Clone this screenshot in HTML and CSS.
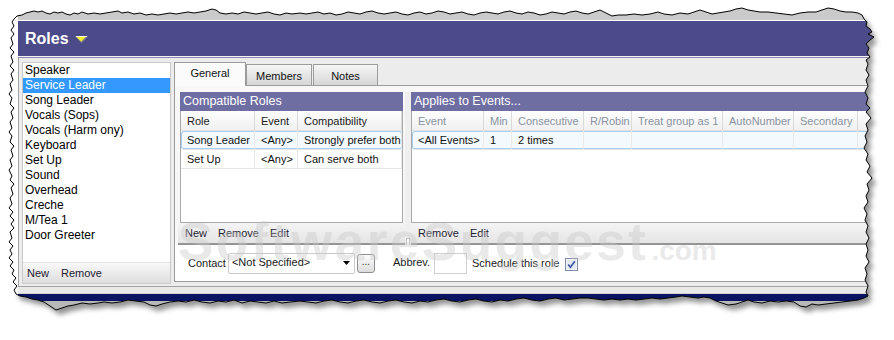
FILE: index.html
```html
<!DOCTYPE html>
<html>
<head>
<meta charset="utf-8">
<title>Roles</title>
<link rel="stylesheet" href="styles.css">
</head>
<body>
<div class="page">
  <div class="window">
    <div class="backband"></div>
    <div class="titlebar">
      <span class="title">Roles</span>
      <svg class="caret" width="13" height="7" viewBox="0 0 13 7"><polygon points="0,0 13,0 6.5,7" fill="#8a8a8a"/><polygon points="1,0.6 11.2,0.6 6,5.6" fill="#f3ee2c"/><polygon points="0.5,0 12.5,0 11.6,1 1.4,1" fill="#fffbe0"/></svg>
    </div>
    <div class="titlerule"></div>
    <div class="body">
      <div class="listpanel">
        <ul class="list">
          <li>Speaker</li>
          <li class="sel">Service Leader</li>
          <li>Song Leader</li>
          <li>Vocals (Sops)</li>
          <li>Vocals (Harm ony)</li>
          <li>Keyboard</li>
          <li>Set Up</li>
          <li>Sound</li>
          <li>Overhead</li>
          <li>Creche</li>
          <li>M/Tea 1</li>
          <li>Door Greeter</li>
        </ul>
        <div class="listbar"><span>New</span><span>Remove</span></div>
      </div>
      <div class="tabsarea">
        <div class="tabs">
          <div class="tab active">General</div>
          <div class="tab">Members</div>
          <div class="tab notes">Notes</div>
        </div>
        <div class="tabpanel">
          <div class="grids">
            <div class="section left">
              <div class="grid">
                <div class="gtitle">Compatible Roles</div>
                <div class="colhead cols-a">
                  <div class="cell">Role</div><div class="cell">Event</div><div class="cell">Compatibility</div>
                </div>
                <div class="row cols-a sel">
                  <div class="cell">Song Leader</div><div class="cell">&lt;Any&gt;</div><div class="cell">Strongly prefer both</div>
                </div>
                <div class="row cols-a">
                  <div class="cell">Set Up</div><div class="cell">&lt;Any&gt;</div><div class="cell">Can serve both</div>
                </div>
              </div>
              <div class="toolbar"><span>New</span><span>Remove</span><span>Edit</span></div>
            </div>
            <div class="splitter"><div class="handle"></div></div>
            <div class="section right">
              <div class="grid">
                <div class="gtitle">Applies to Events...</div>
                <div class="colhead cols-b dim">
                  <div class="cell">Event</div><div class="cell">Min</div><div class="cell">Consecutive</div><div class="cell">R/Robin</div><div class="cell">Treat group as 1</div><div class="cell">AutoNumber</div><div class="cell">Secondary</div><div class="cell"></div>
                </div>
                <div class="row cols-b sel">
                  <div class="cell">&lt;All Events&gt;</div><div class="cell">1</div><div class="cell">2 times</div><div class="cell"></div><div class="cell"></div><div class="cell"></div><div class="cell"></div><div class="cell"></div>
                </div>
              </div>
              <div class="toolbar"><span>Remove</span><span>Edit</span></div>
            </div>
          </div>
          <div class="form">
            <span>Contact</span>
            <div class="combo"><span>&lt;Not Specified&gt;</span><svg width="7" height="4" viewBox="0 0 7 4"><polygon points="0,0 7,0 3.5,4" fill="#000"/></svg></div>
            <div class="dots">...</div>
            <span class="abbrev">Abbrev.</span>
            <div class="input"></div>
            <span class="sched">Schedule this role</span>
            <svg class="check" width="13" height="13" viewBox="0 0 13 13"><rect x="0.5" y="0.5" width="12" height="12" fill="#e4e9f1" stroke="#7d8aa6"/><rect x="1.5" y="1.5" width="10" height="10" fill="none" stroke="#f4f6fa"/><path d="M3.2 6.6 L5.4 9.2 L9.8 3.2" fill="none" stroke="#3552a0" stroke-width="1.6"/></svg>
          </div>
        </div>
      </div>
    </div>
    <div class="footer"></div>
    <div class="navy"></div>
    <div class="ground"></div>
  </div>
  <div class="watermark">SoftwareSuggest<span>.com</span></div>
  <svg class="tear" width="894" height="340" viewBox="0 0 894 340">
    <defs>
      <polygon id="edge" points="12,22 14,19 17,16 22,15 26,13 30,12 34,11 38,12 42,11 46,13 50,14 54,12 58,13 62,12 66,14 70,15 74,13 78,14 82,12 88,14 94,13 100,14 106,13 112,12 118,11 122,13 128,12 134,14 140,13 146,15 152,14 158,15 164,14 170,13 176,14 182,13 188,12 194,13 200,12 206,11 212,9 216,10 220,13 226,14 232,13 238,14 244,12 250,13 256,14 262,13 268,12 274,14 280,15 286,13 292,14 300,13 306,14 312,13 318,12 324,14 330,13 336,15 342,14 348,12 354,13 360,14 366,12 372,11 378,13 384,14 390,13 396,12 402,14 408,15 414,13 420,12 426,14 432,13 438,11 444,12 450,14 456,13 462,12 468,14 474,15 480,13 486,12 492,13 498,14 504,12 510,11 516,13 522,14 528,12 534,13 540,15 546,14 552,12 558,13 564,14 570,12 576,11 582,13 588,14 594,12 600,10 606,13 612,16 618,15 626,15 634,14 642,15 650,14 658,12 664,14 672,15 680,13 688,14 694,12 700,10 706,12 712,14 718,13 724,12 730,11 736,9 742,8 748,10 754,11 760,12 768,12 776,13 784,14 792,15 800,13 808,12 816,12 822,10 828,8 834,9 840,11 846,12 852,12 858,13 862,15 864,19 867,22 866,26 870,29 872,32 868,34 874,37 870,40 866,44 869,48 867,53 870,57 866,60 868,64 866,70 869,75 866,80 868,86 865,92 868,98 866,104 870,108 866,112 871,118 866,124 868,130 865,136 867,142 864,148 868,154 866,160 870,166 867,172 872,178 867,184 869,190 866,196 868,202 864,208 867,214 865,220 868,226 866,232 869,238 866,244 868,250 866,256 869,262 865,268 867,274 865,280 868,286 866,292 868,296 864,298 858,300 850,301 842,302 834,303 826,304 818,305 812,304 806,307 800,306 794,302 786,301 778,302 770,301 762,303 754,302 748,300 742,302 736,304 728,305 722,303 716,301 710,298 704,297 698,298 690,297 682,296 676,297 668,298 660,299 652,298 644,299 636,300 628,299 620,300 612,299 604,300 596,299 588,298 580,298 572,299 564,300 556,298 548,299 540,301 532,300 524,298 516,299 508,301 500,300 492,302 484,301 476,299 468,300 460,302 452,301 444,299 436,300 428,302 420,301 412,303 404,302 396,300 388,301 380,303 372,302 364,300 356,301 348,303 340,302 332,300 324,301 316,303 308,302 300,301 290,302 282,303 274,301 266,303 258,302 250,301 242,303 234,300 226,302 218,301 210,303 202,302 194,300 186,302 178,301 170,302 162,304 156,306 150,305 144,302 136,301 128,300 120,302 112,303 104,302 98,303 90,304 82,303 74,305 68,306 62,308 56,310 50,306 44,302 38,300 32,299 26,297 20,296 16,294 14,290 17,286 13,282 16,278 12,274 14,270 10,266 13,262 9,258 12,254 10,250 13,246 9,242 12,238 10,232 14,228 11,224 14,220 10,216 13,212 9,208 12,204 10,198 13,194 11,188 14,184 10,180 12,176 9,170 12,166 10,160 13,156 11,150 14,146 10,142 12,136 9,132 12,128 10,122 13,118 11,112 14,108 10,104 12,98 9,94 12,90 10,84 13,80 11,74 14,70 10,66 13,62 11,56 14,52 10,48 13,44 11,38 14,34 11,30 14,26"/>
      <mask id="outside" maskUnits="userSpaceOnUse" x="0" y="0" width="894" height="340">
        <rect width="894" height="340" fill="#fff"/>
        <use href="#edge" fill="#000"/>
      </mask>
      <filter id="blur" x="-10%" y="-10%" width="120%" height="120%"><feGaussianBlur stdDeviation="2.6"/></filter>
    </defs>
    <rect width="894" height="340" fill="#fff" mask="url(#outside)"/>
    <g mask="url(#outside)"><use href="#edge" transform="translate(4 5)" fill="#000" fill-opacity="0.42" filter="url(#blur)"/></g>
    <use href="#edge" fill="none" stroke="#000" stroke-width="1"/>
  </svg>
</div>
</body>
</html>
```

FILE: styles.css
```css
* { box-sizing: border-box; }
html, body { margin: 0; padding: 0; background: #fff; }
body { font-family: "Liberation Sans", Arial, sans-serif; font-size: 11px; color: #1c1c1c; }

.page { position: relative; width: 894px; height: 340px; overflow: hidden; padding: 8px 0 0 18px; }
.window { width: 862px; }

.backband { height: 12px; background: #cacaca; }
.titlebar { height: 36px; border-top: 1px solid #ffffff; background: #4c4b8a; display: flex; align-items: center; gap: 6px; padding-left: 7px; }
.title { color: #fff; font-weight: bold; font-size: 16px; }
.caret { display: block; margin-top: 1px; }
.titlerule { height: 2px; border-top: 1px solid #f4f4f8; border-bottom: 1px solid #8b8aad; }

.body { height: 229px; display: flex; align-items: flex-start; background: #ececec; border-left: 1px solid #a3a3a3; border-bottom: 1px solid #a3a3a3; padding: 4px 0 0 3px; }

.listpanel { width: 149px; height: 222px; border: 1px solid #c9c9c9; display: flex; flex-direction: column; margin-right: 3px; background: #fff; }
.list { flex: 1; list-style: none; margin: 0; padding: 0; font-size: 12px; color: #000; }
.list li { height: 15px; line-height: 15px; padding-left: 2px; white-space: nowrap; }
.list li.sel { background: #3399ff; color: #fff; }
.listbar { height: 21px; display: flex; align-items: center; gap: 12px; padding-left: 4px; background: linear-gradient(#f8f8f8, #dedede); border-top: 1px solid #e3e3e3; color: #1e2030; }

.tabsarea { flex: 1; display: flex; flex-direction: column; }
.tabs { display: flex; align-items: flex-end; height: 23px; }
.tab { height: 21px; width: 66px; border: 1px solid #9c9c9c; border-bottom: none; background: linear-gradient(#f6f6f6, #d6d6d6); display: flex; align-items: center; justify-content: center; padding-top: 1px; color: #111; }
.tab.active { height: 24px; width: 72px; background: #fbfbfb; margin-bottom: -1px; position: relative; z-index: 1; padding-top: 0; padding-bottom: 3px; }
.tab.notes { width: 65px; margin-left: 1px; }

.tabpanel { height: 197px; border: 1px solid #9c9c9c; background: #f7f7f7; padding-top: 6px; display: flex; flex-direction: column; }
.grids { height: 153px; display: flex; padding-left: 3px; }
.section { height: 153px; display: flex; flex-direction: column; }
.section.left { width: 227px; }
.section.right { flex: 1; }
.section.left .grid { margin: 0 2px; }

.grid { height: 131px; border: 1px solid #a9a9a9; border-top: none; background: #fff; display: flex; flex-direction: column; }
.gtitle { height: 19px; line-height: 19px; margin: 0 -1px; padding-left: 3px; background: #6f6ea3; color: #fff; font-size: 12.5px; white-space: nowrap; }

.cols-a { display: grid; grid-template-columns: 74px 43px 1fr; }
.cols-b { display: grid; grid-template-columns: 72px 28px 72px 48px 91px 71px 64px 1fr; }

.colhead { height: 20px; background: linear-gradient(#fefefe, #f0f0f0); border-bottom: 1px solid #e2e2e2; color: #1a1a1a; }
.colhead.dim { color: #8a93a1; }
.cell { display: flex; align-items: center; padding-left: 6px; border-right: 1px solid #dadada; white-space: nowrap; overflow: hidden; }
.row { height: 19px; border-bottom: 1px solid #e6e6e6; color: #111; }
.row .cell { border-right-color: #e9e9e9; }
.row.sel { background: #f4f9fe; box-shadow: inset 0 0 0 1px #a9cef3; border-radius: 3px; }

.toolbar { height: 22px; display: flex; align-items: center; gap: 11px; padding-left: 7px; background: linear-gradient(#f4f4f4, #e5e5e5); border-bottom: 2px solid #959595; color: #1e2030; }

.splitter { width: 6px; height: 153px; background: #efefef; display: flex; flex-direction: column; justify-content: flex-end; }
.handle { height: 7px; margin: 0 1px 0 1px; border: 1px solid #c4c4c4; border-bottom: none; background: #fafafa; }

.form { height: 36px; background: #fff; display: flex; align-items: center; padding-left: 13px; color: #1a1a1a; }
.combo { width: 127px; height: 21px; margin-left: 2px; border: 1px solid #cacaca; border-radius: 2px; display: flex; align-items: center; justify-content: space-between; padding: 0 4px 2px 3px; }
.combo svg { display: block; margin-top: 2px; }
.dots { width: 18px; height: 19px; margin-left: 2px; border: 1px solid #8f8f8f; border-radius: 3px; background: linear-gradient(#fdfdfd, #dcdcdc); display: flex; align-items: center; justify-content: center; font-size: 10px; padding-bottom: 3px; color: #333; }
.abbrev { margin-left: 18px; margin-bottom: 2px; }
.input { width: 33px; height: 21px; margin-left: 4px; border: 1px solid #d0d0d0; }
.sched { margin-left: 5px; }
.check { display: block; margin-left: 6px; margin-top: 2px; }

.footer { height: 7px; background: #e9e9e9; border-bottom: 1px solid #d2d2d2; }
.navy { height: 7px; background: #0b1462; }
.ground { height: 24px; background: #b8b8b8; }

.watermark { position: absolute; left: 178px; top: 215px; font-family: "Liberation Sans", Arial, sans-serif; font-weight: bold; font-size: 53px; letter-spacing: 2.5px; line-height: 1; color: rgba(200, 200, 200, 0.4); white-space: nowrap; pointer-events: none; }
.watermark span { font-size: 28px; letter-spacing: 0; margin-left: 3px; }

.tear { position: absolute; left: 0; top: 0; pointer-events: none; }
```
